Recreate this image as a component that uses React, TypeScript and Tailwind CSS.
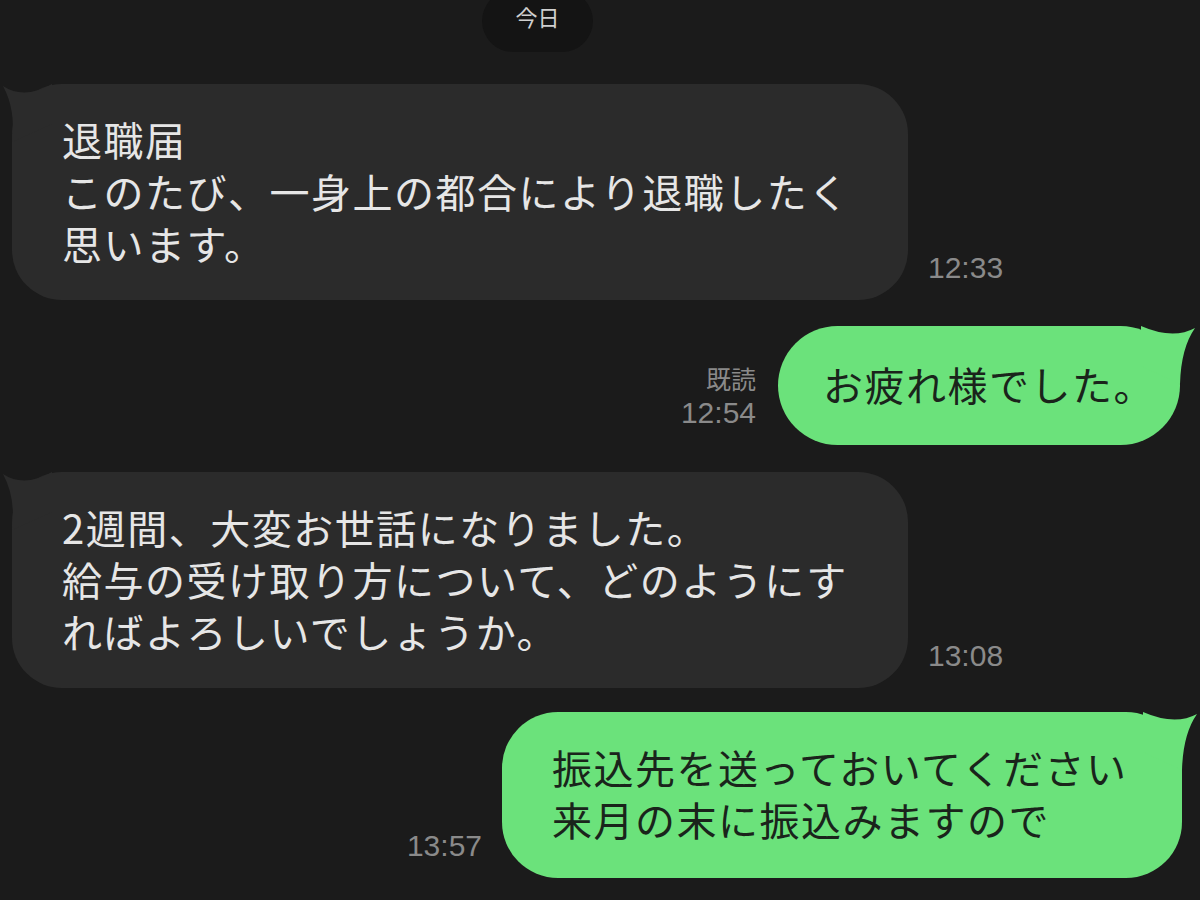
import React from 'react';

const jp = "font-['Noto_Sans_CJK_JP','Noto_Sans',sans-serif]";
const num = "font-['Liberation_Sans',Arial,sans-serif]";

// tail drawn over the top-left corner of a received bubble
const LeftTail = () => (
    <svg className="absolute -left-[10px] top-0" width="56" height="60" viewBox="0 0 56 60">
        <path d="M1 2 Q22 16 50 0 L50 40 L10 58 Q14 26 1 2 Z" fill="#2b2b2b" />
    </svg>
);

// tail drawn over the top-right corner of a sent bubble
const RightTail = () => (
    <svg className="absolute -right-[17px] top-0" width="60" height="60" viewBox="0 0 60 60">
        <path d="M58 2 Q36 14 4 0 L4 40 L43 58 Q44 22 58 2 Z" fill="#6be27b" />
    </svg>
);

const Time = ({ t, className = '' }: { t: string; className?: string }) => (
    <span className={`${num} text-[30px] leading-[30px] text-[#8a8a8a] ${className}`}>{t}</span>
);

export default function App() {
    return (
        <div className={`w-[1200px] h-[900px] bg-[#1b1b1b] overflow-hidden flex flex-col ${jp}`}>
            {/* date pill */}
            <div className="h-[52px] flex">
                <div className="ml-[482px] w-[111px] h-[62px] -mt-[10px] rounded-full bg-[#141414] flex justify-center pt-[15px] text-[22px] leading-none text-[#cfcfcf]">
                    今日
                </div>
            </div>

            {/* received 1 */}
            <div className="mt-[32px] flex items-end pl-[12px]">
                <div className="relative w-[896px] h-[216px] rounded-[50px] bg-[#2b2b2b] pl-[50px] pt-[29px] text-[40px] leading-[52px] tracking-[1.5px] text-[#e6e6e6] whitespace-nowrap">
                    <LeftTail />
                    <div className="relative">退職届</div>
                    <div className="relative">このたび、一身上の都合により退職したく</div>
                    <div className="relative">思います。</div>
                </div>
                <Time t="12:33" className="ml-[20px] mb-[17px]" />
            </div>

            {/* sent 1 */}
            <div className="mt-[26px] flex items-end justify-end pr-[20px]">
                <div className="flex flex-col items-end mr-[22px] mb-[17px] gap-[7px]">
                    <span className="text-[25px] leading-[26px] text-[#8a8a8a]">既読</span>
                    <Time t="12:54" />
                </div>
                <div className="relative w-[402px] h-[119px] rounded-[60px] bg-[#6be27b] pl-[45px] pt-[32px] text-[40px] leading-[52px] tracking-[1.5px] text-[#1a241b] whitespace-nowrap">
                    <RightTail />
                    <div className="relative">お疲れ様でした。</div>
                </div>
            </div>

            {/* received 2 */}
            <div className="mt-[27px] flex items-end pl-[12px]">
                <div className="relative w-[896px] h-[216px] rounded-[50px] bg-[#2b2b2b] pl-[50px] pt-[29px] text-[40px] leading-[52px] tracking-[1.5px] text-[#e6e6e6] whitespace-nowrap">
                    <LeftTail />
                    <div className="relative">2週間、大変お世話になりました。</div>
                    <div className="relative">給与の受け取り方について、どのようにす</div>
                    <div className="relative">ればよろしいでしょうか。</div>
                </div>
                <Time t="13:08" className="ml-[20px] mb-[17px]" />
            </div>

            {/* sent 2 */}
            <div className="mt-[24px] flex items-end justify-end pr-[18px]">
                <Time t="13:57" className="mr-[20px] mb-[17px]" />
                <div className="relative w-[680px] h-[166px] rounded-[56px] bg-[#6be27b] pl-[50px] pt-[29px] text-[40px] leading-[52px] tracking-[1.5px] text-[#1a241b] whitespace-nowrap">
                    <RightTail />
                    <div className="relative">振込先を送っておいてください</div>
                    <div className="relative">来月の末に振込みますので</div>
                </div>
            </div>
        </div>
    );
}
